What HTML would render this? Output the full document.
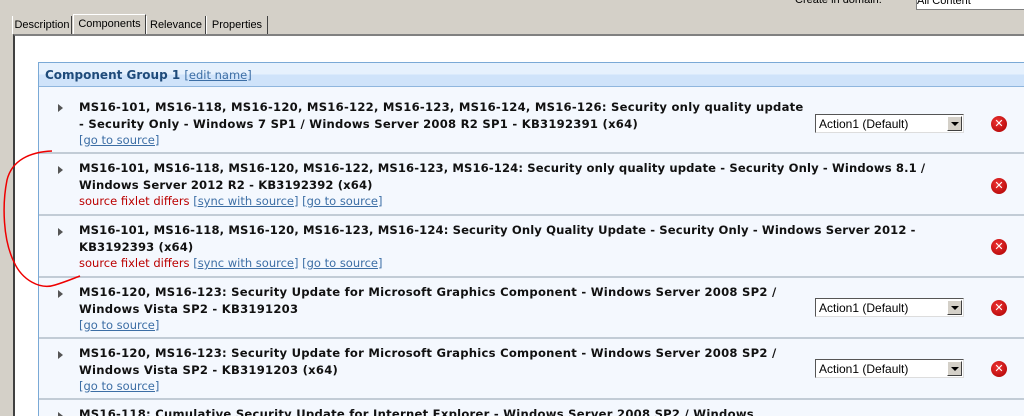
<!DOCTYPE html>
<html><head><style>
html,body{margin:0;width:1024px;height:416px;overflow:hidden}
body{background:#d4d0c8;font-family:"DejaVu Sans","Liberation Sans",sans-serif;position:relative}
.abs{position:absolute}
.tab{position:absolute;top:16px;height:18px;font:11px "Liberation Sans",sans-serif;background:#d4d0c8;border-right:1px solid #404040;border-left:1px solid #fff;line-height:18px;color:#000;text-align:center;box-sizing:border-box}
.content{position:absolute;left:13px;top:34px;width:1011px;height:382px;background:#fff;border-left:2px solid #404040;border-top:2px solid #808080;box-sizing:border-box}
.group{position:absolute;left:38px;top:62px;width:1000px;height:360px;border:1px solid #7aa9d6;background:#f4f8fe}
.hdr{position:absolute;left:0;top:0;width:100%;height:24px;background:linear-gradient(#e6f1fd 0,#e6f1fd 50%,#cfe3fa 50%);border-bottom:1px solid #8fb6de;font:bold 12px "DejaVu Sans",sans-serif;color:#1f4b7a;line-height:24px;padding-left:6px;box-sizing:border-box}
.hdr a{font-weight:normal;color:#3c6ea5;text-decoration:underline;font-size:11.5px}
.row{position:absolute;left:0;width:100%;border-bottom:2px solid #c2ccd6}
.t{position:absolute;left:40px;font:bold 11.6px/17px "DejaVu Sans",sans-serif;color:#111;width:880px;letter-spacing:0.12px}
.t.n{width:725px;letter-spacing:0.25px}
.l{position:absolute;left:40px;font:11.5px "DejaVu Sans",sans-serif;color:#3c6ea5}
.l span.r{color:#b00}
.l u{color:#3c6ea5}
.tri{position:absolute;left:19px;width:0;height:0;border-top:4px solid transparent;border-bottom:4px solid transparent;border-left:5px solid #555}
.sel{position:absolute;left:776px;width:149px;height:19px;border:1px solid #555;border-right-color:#ddd;border-bottom-color:#ddd;background:#fff;font:12px "Liberation Sans",sans-serif;line-height:19px;padding-left:3px;box-sizing:border-box}
.sel b{position:absolute;right:1px;top:1px;width:15px;height:15px;background:#d4d0c8;border:1px solid #fff;border-right-color:#404040;border-bottom-color:#404040;box-sizing:border-box}
.sel b:after{content:"";position:absolute;left:3px;top:5px;border-left:4px solid transparent;border-right:4px solid transparent;border-top:4px solid #000}
.x{position:absolute;left:952px;width:16px;height:16px;border-radius:50%;background:radial-gradient(circle at 40% 35%,#e33,#a00);color:#fff;font:bold 11px/16px "DejaVu Sans",sans-serif;text-align:center}
</style></head><body>
<div class="abs" style="left:795px;top:-6px;font:11px 'Liberation Sans',sans-serif">Create in domain:</div>
<div class="abs" style="left:916px;top:-4px;width:110px;height:12px;background:#fff;border:1px solid #808080;font:11px 'Liberation Sans',sans-serif;line-height:8px">All Content</div>
<div class="tab" style="left:12px;width:60px">Description</div>
<div class="tab" style="left:73px;top:14px;height:20px;width:73px;border-top:1px solid #fff">Components</div>
<div class="tab" style="left:146px;width:60px">Relevance</div>
<div class="tab" style="left:206px;width:62px">Properties</div>
<div class="content"></div>
<div class="group">
<div class="hdr">Component Group 1 <a>[edit name]</a></div>
<div class="row" style="top:25px;height:64px">
 <div class="tri" style="top:16px"></div>
 <div class="t n" style="top:11px">MS16-101, MS16-118, MS16-120, MS16-122, MS16-123, MS16-124, MS16-126: Security only quality update - Security Only - Windows 7 SP1 / Windows Server 2008 R2 SP1 - KB3192391 (x64)</div>
 <div class="l" style="top:45px"><u>[go to source]</u></div>
 <div class="sel" style="top:26px">Action1 (Default)<b></b></div>
 <div class="x" style="top:28px">✕</div>
</div>
<div class="row" style="top:91px;height:60px">
 <div class="tri" style="top:12px"></div>
 <div class="t" style="top:6px">MS16-101, MS16-118, MS16-120, MS16-122, MS16-123, MS16-124: Security only quality update - Security Only - Windows 8.1 /<br>Windows Server 2012 R2 - KB3192392 (x64)</div>
 <div class="l" style="top:40px"><span class="r">source fixlet differs</span> <u>[sync with source]</u> <u>[go to source]</u></div>
 <div class="x" style="top:24px">✕</div>
</div>
<div class="row" style="top:153px;height:60px">
 <div class="tri" style="top:12px"></div>
 <div class="t" style="top:6px">MS16-101, MS16-118, MS16-120, MS16-123, MS16-124: Security Only Quality Update - Security Only - Windows Server 2012 -<br>KB3192393 (x64)</div>
 <div class="l" style="top:40px"><span class="r">source fixlet differs</span> <u>[sync with source]</u> <u>[go to source]</u></div>
 <div class="x" style="top:23px">✕</div>
</div>
<div class="row" style="top:215px;height:59px">
 <div class="tri" style="top:12px"></div>
 <div class="t n" style="top:6px">MS16-120, MS16-123: Security Update for Microsoft Graphics Component - Windows Server 2008 SP2 / Windows Vista SP2 - KB3191203</div>
 <div class="l" style="top:40px"><u>[go to source]</u></div>
 <div class="sel" style="top:20px">Action1 (Default)<b></b></div>
 <div class="x" style="top:22px">✕</div>
</div>
<div class="row" style="top:276px;height:59px">
 <div class="tri" style="top:12px"></div>
 <div class="t n" style="top:6px">MS16-120, MS16-123: Security Update for Microsoft Graphics Component - Windows Server 2008 SP2 / Windows Vista SP2 - KB3191203 (x64)</div>
 <div class="l" style="top:40px"><u>[go to source]</u></div>
 <div class="sel" style="top:20px">Action1 (Default)<b></b></div>
 <div class="x" style="top:22px">✕</div>
</div>
<div class="row" style="top:337px;height:30px;border:none">
 <div class="tri" style="top:12px"></div>
 <div class="t n" style="top:6px">MS16-118: Cumulative Security Update for Internet Explorer - Windows Server 2008 SP2 / Windows</div>
</div>
</div>
<svg class="abs" style="left:0;top:0" width="1024" height="416"><path d="M52,151 C30,152 12,160 7,180 C2,205 3,240 14,262 C22,280 40,290 55,285 C65,282 72,279 80,276" fill="none" stroke="#e00" stroke-width="1.5"/></svg>
</body></html>
